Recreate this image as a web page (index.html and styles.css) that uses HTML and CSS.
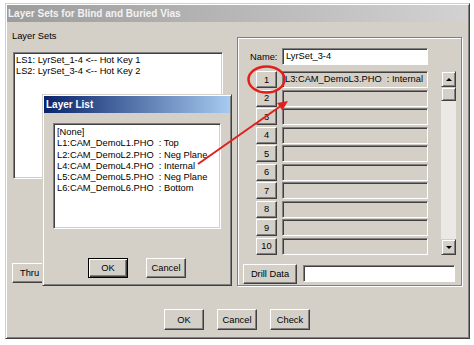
FILE: index.html
```html
<!DOCTYPE html>
<html lang="en">
<head>
    <meta charset="UTF-8">
    <title>Layer Sets for Blind and Buried Vias</title>
    <link rel="stylesheet" href="styles.css">
</head>
<body>
    <div class="dialog">
        <div class="caption">Layer Sets for Blind and Buried Vias</div>

        <div class="client">
            <div class="sets">
                <div class="label">Layer Sets</div>
                <div class="listbox sets-list">
                    <div class="item">LS1: LyrSet_1-4 &lt;-- Hot Key 1</div>
                    <div class="item">LS2: LyrSet_3-4 &lt;-- Hot Key 2</div>
                </div>
                <button class="btn thru">Thru</button>
            </div>

            <div class="group">
                <div class="name-row">
                    <span class="name-label">Name:</span>
                    <div class="edit name-edit">LyrSet_3-4</div>
                </div>

                <div class="slots">
                    <div class="slot-list">
                        <div class="slot"><button class="btn num">1</button><div class="field">L3:CAM_DemoL3.PHO  : Internal</div></div>
                        <div class="slot"><button class="btn num">2</button><div class="field"></div></div>
                        <div class="slot"><button class="btn num">3</button><div class="field"></div></div>
                        <div class="slot"><button class="btn num">4</button><div class="field"></div></div>
                        <div class="slot"><button class="btn num">5</button><div class="field"></div></div>
                        <div class="slot"><button class="btn num">6</button><div class="field"></div></div>
                        <div class="slot"><button class="btn num">7</button><div class="field"></div></div>
                        <div class="slot"><button class="btn num">8</button><div class="field"></div></div>
                        <div class="slot"><button class="btn num">9</button><div class="field"></div></div>
                        <div class="slot"><button class="btn num">10</button><div class="field"></div></div>
                    </div>
                    <div class="scrollbar">
                        <div class="sb-btn up"></div>
                        <div class="sb-thumb"></div>
                        <div class="sb-track"></div>
                        <div class="sb-btn down"></div>
                    </div>
                </div>

                <div class="drill-row">
                    <button class="btn drill">Drill Data</button>
                    <div class="edit drill-edit"></div>
                </div>
            </div>
        </div>

        <div class="actions">
            <button class="btn">OK</button>
            <button class="btn">Cancel</button>
            <button class="btn">Check</button>
        </div>

        <!-- floating picker window -->
        <div class="popup">
            <div class="caption active">Layer List</div>
            <div class="listbox layers">
                <div class="item">[None]</div>
                <div class="item">L1:CAM_DemoL1.PHO  : Top</div>
                <div class="item">L2:CAM_DemoL2.PHO  : Neg Plane</div>
                <div class="item">L4:CAM_DemoL4.PHO  : Internal</div>
                <div class="item">L5:CAM_DemoL5.PHO  : Neg Plane</div>
                <div class="item">L6:CAM_DemoL6.PHO  : Bottom</div>
            </div>
            <div class="popup-actions">
                <button class="btn default">OK</button>
                <button class="btn">Cancel</button>
            </div>
        </div>
    </div>

    <!-- red annotation -->
    <svg class="marks" width="474" height="345" viewBox="0 0 474 345">
        <ellipse cx="266.5" cy="79.5" rx="18" ry="13" fill="none" stroke="#e0201c" stroke-width="2.5"/>
        <line x1="198" y1="164" x2="280" y2="106.5" stroke="#e0201c" stroke-width="2"/>
        <polygon points="288,101 282.3,110.4 277.2,103" fill="#e0201c"/>
    </svg>
</body>
</html>
```

FILE: styles.css
```css
body {
    margin: 0;
    background: #fff;
    font-family: "Liberation Sans", Arial, sans-serif;
    font-size: 9.3px;
    color: #000;
}

.dialog {
    position: relative;
    box-sizing: border-box;
    width: 465px;
    height: 336px;
    margin: 3px 0 0 5px;
    padding: 1px;
    background: #d4d0c8;
    border: 1px solid;
    border-color: #d4d0c8 #404040 #404040 #d4d0c8;
    box-shadow: inset 1px 1px #fff, inset -1px -1px #808080;
}

.caption {
    height: 17px;
    line-height: 17px;
    padding-left: 1px;
    font-size: 10px;
    font-weight: bold;
    color: #f2f2f2;
    background: linear-gradient(to right, #9c9c9c, #d2d2d2);
    white-space: nowrap;
}

.caption.active {
    padding-left: 2px;
    color: #fff;
    background: linear-gradient(to right, #0a246a, #a6caf0);
}

.client {
    display: flex;
    align-items: flex-start;
    padding-left: 5px;
}

.sets {
    width: 211px;
    margin-top: 9px;
}

.label {
    height: 11px;
    line-height: 11px;
}

.listbox {
    box-sizing: border-box;
    padding: 2px 0 0 2px;
    background: #fff;
    border: 1px solid;
    border-color: #808080 #fff #fff #808080;
    box-shadow: inset 1px 1px #404040, inset -1px -1px #d4d0c8;
    line-height: 11.3px;
}

.item {
    white-space: pre;
}

.sets-list {
    width: 210px;
    height: 127px;
    margin: 10px 0 0 1px;
}

.btn {
    box-sizing: border-box;
    display: flex;
    align-items: center;
    justify-content: center;
    padding: 0;
    font: inherit;
    color: #000;
    background: #d4d0c8;
    border: 1px solid;
    border-color: #fff #404040 #404040 #fff;
    box-shadow: inset -1px -1px #808080;
    white-space: nowrap;
}

.thru {
    width: 70px;
    height: 20px;
    margin-top: 84px;
    justify-content: flex-start;
    padding-left: 7px;
}

.group {
    box-sizing: border-box;
    width: 225px;
    height: 249px;
    margin: 15px 0 0 14px;
    border: 1px solid #808080;
    box-shadow: 1px 1px #fff, inset 1px 1px #fff;
}

.name-row {
    display: flex;
    align-items: center;
    margin: 10px 0 0 12px;
}

.name-label {
    width: 32px;
}

.edit,
.field {
    box-sizing: border-box;
    height: 17px;
    padding: 0 3px;
    line-height: 15px;
    background: #fff;
    border: 1px solid;
    border-color: #808080 #fff #fff #808080;
    box-shadow: inset 1px 1px #404040;
    white-space: pre;
}

.name-edit {
    width: 146px;
}

.slots {
    display: flex;
    margin-top: 6px;
}

.slot-list {
    display: flex;
    flex-direction: column;
    gap: 1.5px;
    margin-left: 18px;
}

.slot {
    display: flex;
    height: 17px;
}

.num {
    width: 21px;
    height: 17px;
    margin-right: 5px;
}

.field {
    width: 146px;
    padding-left: 2px;
    background: #d4d0c8;
}

.scrollbar {
    display: flex;
    flex-direction: column;
    width: 15px;
    height: 184px;
    margin-left: 13px;
}

.sb-btn,
.sb-thumb {
    box-sizing: border-box;
    display: flex;
    align-items: center;
    justify-content: center;
    background: #d4d0c8;
    border: 1px solid;
    border-color: #d4d0c8 #404040 #404040 #d4d0c8;
    box-shadow: inset 1px 1px #fff, inset -1px -1px #808080;
}

.sb-btn {
    height: 16px;
}

.sb-thumb {
    height: 14px;
}

.sb-btn::before {
    content: "";
    border-left: 3px solid transparent;
    border-right: 3px solid transparent;
}

.sb-btn.up::before {
    border-bottom: 3px solid #000;
}

.sb-btn.down::before {
    border-top: 3px solid #000;
}

.sb-track {
    flex: 1;
    background: #ebe9e5;
}

.drill-row {
    display: flex;
    align-items: center;
    gap: 6px;
    margin: 8.5px 0 0 5px;
}

.drill {
    width: 54px;
    height: 20px;
}

.drill-edit {
    width: 152px;
}

.actions {
    display: flex;
    gap: 13px;
    margin: 23px 0 0 157px;
}

.actions .btn {
    width: 40px;
    height: 21px;
}

.popup {
    position: absolute;
    left: 36px;
    top: 90px;
    box-sizing: border-box;
    width: 190px;
    height: 192px;
    padding: 1px;
    background: #d4d0c8;
    border: 1px solid;
    border-color: #d4d0c8 #404040 #404040 #d4d0c8;
    box-shadow: inset 1px 1px #fff, inset -1px -1px #808080;
}

.layers {
    width: 168px;
    height: 106px;
    margin: 10px 0 0 9px;
    padding: 3px 0 0 3px;
}

.popup-actions {
    display: flex;
    gap: 18px;
    margin: 29px 0 0 44px;
}

.popup-actions .btn {
    width: 40px;
    height: 20px;
}

.btn.default {
    border-color: #000;
    box-shadow: inset 1px 1px #fff, inset -1px -1px #404040, inset -2px -2px #808080;
}

.marks {
    position: absolute;
    top: 0;
    left: 0;
    pointer-events: none;
}
```
